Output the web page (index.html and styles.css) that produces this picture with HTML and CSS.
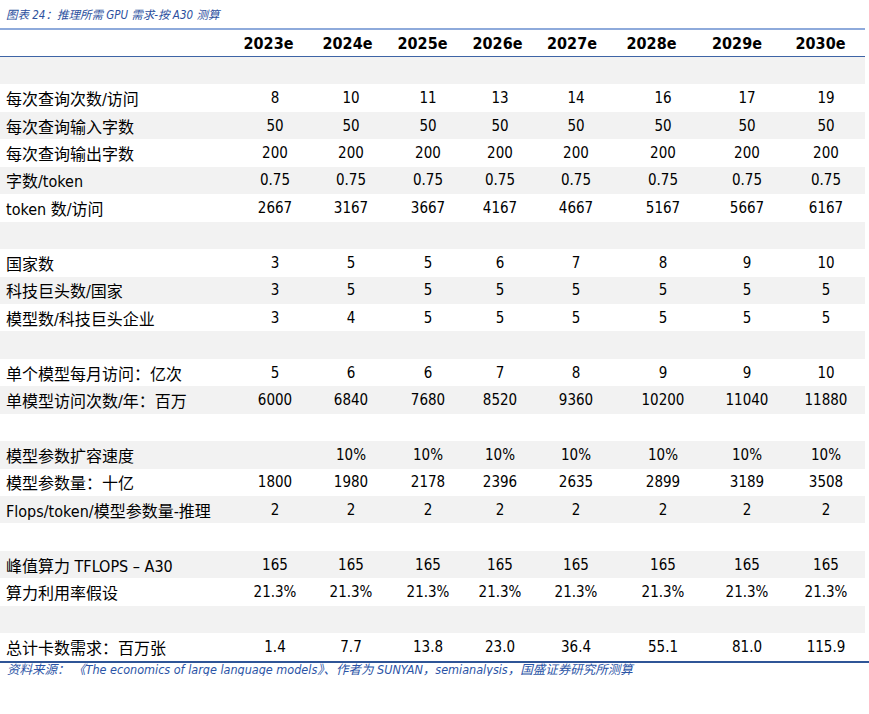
FILE: index.html
```html
<!DOCTYPE html>
<html lang="zh">
<head>
<meta charset="utf-8">
<title>推理所需 GPU 需求</title>
<link rel="stylesheet" href="styles.css">
</head>
<body>
<div class="page">
  <div class="title">图表 24：推理所需 GPU 需求-按 A30 测算</div>
  <div class="table">
    <div class="head">
      <div></div>
      <div>2023e</div><div>2024e</div><div>2025e</div><div>2026e</div>
      <div>2027e</div><div>2028e</div><div>2029e</div><div>2030e</div>
    </div>
    <div class="body">
      <div class="row"><div class="label"></div></div>
      <div class="row"><div class="label">每次查询次数/访问</div><div>8</div><div>10</div><div>11</div><div>13</div><div>14</div><div>16</div><div>17</div><div>19</div></div>
      <div class="row"><div class="label">每次查询输入字数</div><div>50</div><div>50</div><div>50</div><div>50</div><div>50</div><div>50</div><div>50</div><div>50</div></div>
      <div class="row"><div class="label">每次查询输出字数</div><div>200</div><div>200</div><div>200</div><div>200</div><div>200</div><div>200</div><div>200</div><div>200</div></div>
      <div class="row"><div class="label">字数/token</div><div>0.75</div><div>0.75</div><div>0.75</div><div>0.75</div><div>0.75</div><div>0.75</div><div>0.75</div><div>0.75</div></div>
      <div class="row"><div class="label">token 数/访问</div><div>2667</div><div>3167</div><div>3667</div><div>4167</div><div>4667</div><div>5167</div><div>5667</div><div>6167</div></div>
      <div class="row"><div class="label"></div></div>
      <div class="row"><div class="label">国家数</div><div>3</div><div>5</div><div>5</div><div>6</div><div>7</div><div>8</div><div>9</div><div>10</div></div>
      <div class="row"><div class="label">科技巨头数/国家</div><div>3</div><div>5</div><div>5</div><div>5</div><div>5</div><div>5</div><div>5</div><div>5</div></div>
      <div class="row"><div class="label">模型数/科技巨头企业</div><div>3</div><div>4</div><div>5</div><div>5</div><div>5</div><div>5</div><div>5</div><div>5</div></div>
      <div class="row"><div class="label"></div></div>
      <div class="row"><div class="label">单个模型每月访问：亿次</div><div>5</div><div>6</div><div>6</div><div>7</div><div>8</div><div>9</div><div>9</div><div>10</div></div>
      <div class="row"><div class="label">单模型访问次数/年：百万</div><div>6000</div><div>6840</div><div>7680</div><div>8520</div><div>9360</div><div>10200</div><div>11040</div><div>11880</div></div>
      <div class="row"><div class="label"></div></div>
      <div class="row"><div class="label">模型参数扩容速度</div><div></div><div>10%</div><div>10%</div><div>10%</div><div>10%</div><div>10%</div><div>10%</div><div>10%</div></div>
      <div class="row"><div class="label">模型参数量：十亿</div><div>1800</div><div>1980</div><div>2178</div><div>2396</div><div>2635</div><div>2899</div><div>3189</div><div>3508</div></div>
      <div class="row"><div class="label">Flops/token/模型参数量-推理</div><div>2</div><div>2</div><div>2</div><div>2</div><div>2</div><div>2</div><div>2</div><div>2</div></div>
      <div class="row"><div class="label"></div></div>
      <div class="row"><div class="label">峰值算力 TFLOPS – A30</div><div>165</div><div>165</div><div>165</div><div>165</div><div>165</div><div>165</div><div>165</div><div>165</div></div>
      <div class="row"><div class="label">算力利用率假设</div><div>21.3%</div><div>21.3%</div><div>21.3%</div><div>21.3%</div><div>21.3%</div><div>21.3%</div><div>21.3%</div><div>21.3%</div></div>
      <div class="row"><div class="label"></div></div>
      <div class="row"><div class="label">总计卡数需求：百万张</div><div>1.4</div><div>7.7</div><div>13.8</div><div>23.0</div><div>36.4</div><div>55.1</div><div>81.0</div><div>115.9</div></div>
    </div>
  </div>
  <div class="source">资料来源：&nbsp;《The economics of large language models》、作者为 SUNYAN，semianalysis，国盛证券研究所测算</div>
</div>
</body>
</html>
```
FILE: styles.css
```css
html, body {
  margin: 0;
  padding: 0;
  background: #ffffff;
}

.page {
  width: 869px;
  font-family: "DejaVu Sans Condensed", "Noto Sans", "Noto Sans CJK SC", sans-serif;
  color: #000000;
}

.title {
  height: 28px;
  line-height: 31px;
  padding-left: 6px;
  font-size: 11.5px;
  font-style: italic;
  color: #2b4f9e;
  white-space: nowrap;
}

.table {
  width: 865px;
}

.head {
  display: grid;
  grid-template-columns: 227px 83px 75px 75px 75px 74px 85px 86px 81px;
  height: 26px;
  align-items: center;
  border-top: 2px solid #8eaadb;
  border-bottom: 1px solid #3e64a6;
  font-size: 16px;
  font-weight: bold;
  text-align: center;
}

.row {
  display: grid;
  grid-template-columns: 237px 76px 76px 78px 66px 86px 88px 80px 78px;
  height: 27.45px;
  align-items: center;
  font-size: 15px;
  text-align: center;
  white-space: nowrap;
}

.body .row:nth-child(odd) {
  background: #f2f2f2;
}

.label {
  text-align: left;
  padding-left: 6px;
  font-size: 16px;
}

.source {
  border-top: 2px solid #2f5597;
  width: 865px;
  padding-left: 7px;
  font-size: 12.5px;
  line-height: 13px;
  font-style: italic;
  color: #2b54a6;
  white-space: nowrap;
}
```
